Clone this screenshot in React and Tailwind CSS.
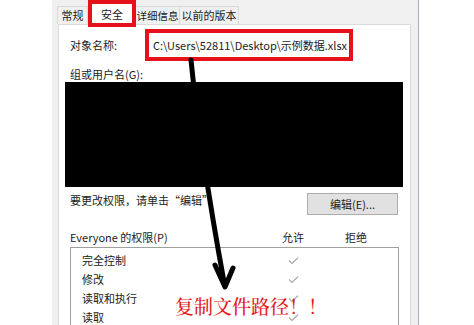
import React from 'react';

const perms = ['完全控制', '修改', '读取和执行', '读取'];

const Check = () => (
  <svg width="11" height="8" viewBox="0 0 11 8" fill="none">
    <path d="M1 3.5 L4 6.5 L10 0.8" stroke="#a9a9a9" strokeWidth="1.2" />
  </svg>
);

const App = () => {
  return (
    <div className="relative w-[474px] h-[325px] bg-white overflow-hidden text-[11px] text-[#1b1b1b] font-['Noto_Sans_CJK_SC','Noto_Sans',sans-serif]">
      <div className="ml-[52px] w-[367px] h-full bg-[#f0f0f0] border-r border-[#a8aeb6] flex flex-col pl-[6px] pr-[7px]">
        {/* tabs */}
        <div className="h-[24px] flex items-end -ml-[1px] relative z-10 whitespace-nowrap">
          <div className="w-[31px] h-[18px] border border-b-0 border-[#d9d9d9] bg-[#f0f0f0] flex items-center justify-center">常规</div>
          <div className="w-[48px] h-[27px] self-start -mb-[3px] border-4 border-[#e5121b] bg-white flex items-start justify-center pt-[3px] leading-[14px]">安全</div>
          <div className="w-[44px] h-[18px] border border-b-0 border-l-0 border-[#d9d9d9] bg-[#f0f0f0] flex items-center justify-center text-[10.5px]">详细信息</div>
          <div className="w-[59px] h-[18px] border border-b-0 border-l-0 border-[#d9d9d9] bg-[#f0f0f0] flex items-center justify-center">以前的版本</div>
        </div>

        {/* panel */}
        <div className="flex-1 bg-white border border-b-0 border-[#dcdcdc] pl-[6px] pr-[7px] pt-[4px] flex flex-col">
          <div className="flex items-center">
            <div className="ml-[5px] w-[75px]">对象名称:</div>
            <div className="w-[208px] h-[32px] border-4 border-[#e5121b] flex items-center pl-[4px] whitespace-nowrap">
              C:\Users\52811\Desktop\示例数据.xlsx
            </div>
          </div>

          <div className="ml-[5px] mt-[6px] h-[15px] leading-[15px]">组或用户名(G):</div>
          <div className="h-[105px] bg-black"></div>

          <div className="flex items-start mt-[6px]">
            <div className="ml-[5px] leading-[15px] flex-1">要更改权限，请单击“编辑”。</div>
            <button className="w-[91px] h-[22px] mr-[5px] bg-[#e1e1e1] border border-[#adadad] text-[11px]">
              编辑(E)...
            </button>
          </div>

          <div className="flex mt-[15px] h-[15px] leading-[15px]">
            <div className="ml-[5px] flex-1">Everyone 的权限(P)</div>
            <div className="w-[40px] text-center">允许</div>
            <div className="w-[23px]"></div>
            <div className="w-[40px] text-center">拒绝</div>
            <div className="w-[27px]"></div>
          </div>

          <div className="ml-[5px] mr-[4px] mt-[2px] flex-1 border border-b-0 border-[#a0a0a0] pt-[3px]">
            {perms.map((p) => (
              <div key={p} className="flex items-center h-[19px]">
                <div className="pl-[11px] flex-1">{p}</div>
                <div className="w-[40px] flex justify-center">
                  <Check />
                </div>
                <div className="w-[85px]"></div>
              </div>
            ))}
          </div>
        </div>
      </div>

      {/* hand-drawn arrow */}
      <svg className="absolute inset-0 pointer-events-none" width="474" height="325" viewBox="0 0 474 325" fill="none">
        <path d="M191 60 C 198 130, 209 200, 224 282" stroke="#000" strokeWidth="5" strokeLinecap="round" />
        <path d="M215 265 L225 287 L233 268" stroke="#000" strokeWidth="5" strokeLinecap="round" strokeLinejoin="round" />
      </svg>

      <div className="absolute left-[175px] top-[293px] text-[19px] leading-[26px] font-medium text-[#e21c1c] whitespace-nowrap font-['Noto_Serif_CJK_SC','Noto_Sans_CJK_SC',serif]">
        复制文件路径！！
      </div>
    </div>
  );
};

export default App;
